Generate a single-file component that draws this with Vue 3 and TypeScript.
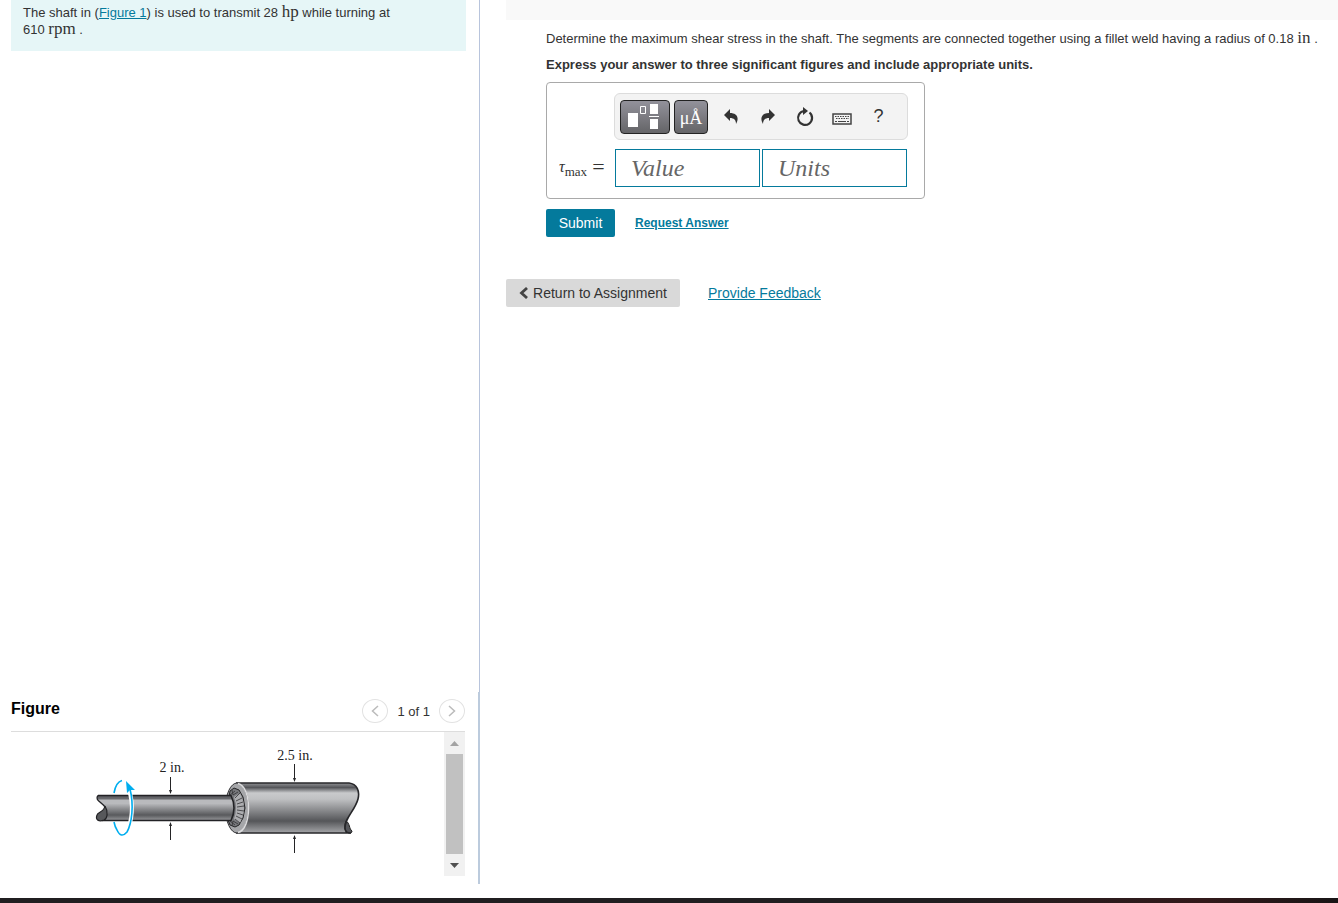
<script setup lang="ts">
import { ref } from 'vue'

const value = ref('')
const units = ref('')
const page = ref(1)
const pageCount = 1
const weldMarks = [
  'M230 795 l5 -4 M232 790 l1 5 M233 795 l5 -3',
  'M235 798 l5 -5 M236 801 l6 -3 M237 804 l6 -2 M237 807 l7 -1 M237 810 l7 1 M237 813 l6 2 M236 816 l6 3 M235 819 l5 4',
  'M230 821 l5 4 M232 826 l1 -5 M233 821 l5 3',
]
</script>

<template>
  <div class="app">
    <div class="columns">
      <aside class="side">
        <section class="problem">
          <p class="intro">
            The shaft in (<a href="#figure">Figure 1</a>) is used to transmit 28
            <span class="unit">hp</span> while turning at<br />
            610 <span class="unit">rpm</span> .
          </p>
        </section>
        <section id="figure" class="figure">
          <header class="figure-head">
            <h2>Figure</h2>
            <nav class="pager" aria-label="Figure pages">
              <button type="button" aria-label="Previous figure">
                <svg width="8" height="12" viewBox="0 0 8 12"><path d="M7 1 L1.500 6 L7 11" /></svg>
              </button>
              <span>{{ page }} of {{ pageCount }}</span>
              <button type="button" aria-label="Next figure">
                <svg width="8" height="12" viewBox="0 0 8 12"><path d="M1 1 L6.500 6 L1 11" /></svg>
              </button>
            </nav>
          </header>
          <div class="figure-view">
            <svg class="drawing" viewBox="11 732 433 144" role="img" aria-label="Stepped shaft with a fillet weld">
              <defs>
                <linearGradient id="thin" x1="0" y1="0" x2="0" y2="1">
                  <stop offset="0" stop-color="#55565a" />
                  <stop offset=".12" stop-color="#68696d" />
                  <stop offset=".2" stop-color="#b9babd" />
                  <stop offset=".32" stop-color="#b9babd" />
                  <stop offset=".78" stop-color="#58595c" />
                  <stop offset="1" stop-color="#98999c" />
                </linearGradient>
                <linearGradient id="thick" x1="0" y1="0" x2="0" y2="1">
                  <stop offset="0" stop-color="#909194" />
                  <stop offset=".09" stop-color="#55565a" />
                  <stop offset=".2" stop-color="#c9cacc" />
                  <stop offset=".32" stop-color="#c0c1c3" />
                  <stop offset=".76" stop-color="#555659" />
                  <stop offset="1" stop-color="#a5a6a9" />
                </linearGradient>
              </defs>
              <path d="M238 783 H349 C357 784 360 791 358 799 C355 811 344 818 345 829 L347 833 H238 Z" fill="url(#thick)" />
              <path d="M346 821 C350 823 349 829 352 831 C352 834 348 834 346 831 C344 828 345 824 346 821" fill="#55565a" stroke="#222" />
              <path d="M236 783 H349 C357 784 360 791 358 799 C355 811 344 818 345 829 C346 833 348 833 351 833 H236" fill="none" stroke="#27272a" stroke-width="1.600" />
              <ellipse cx="237" cy="808" rx="11.500" ry="25" fill="#a5a6a9" stroke="#303033" />
              <path d="M238 783.500 C252 786 252 830 238 832.500" fill="none" stroke="#dcdcde" stroke-width="1.500" />
              <path d="M229 797 L230 791 L234 788 L239 790 L243 797 L245 808 L243 818 L239 825 L235 827 L230 825 L228 820 Z" fill="#77787c" stroke="#242426" />
              <path d="M234 797 L240 793 Q248 808 240 823 L234 819 Q238 808 234 797" fill="#acadb0" />
              <path v-for="mark in weldMarks" :key="mark" :d="mark" fill="none" stroke="#333336" stroke-width="0.800" />
              <path d="M98 795.500 H231 Q237 808 231 820.500 H102 C109 817 108 811 105 807 C101 803 94 801 98 795.500" fill="url(#thin)" />
              <path d="M102 820.500 H231 Q237 808 231 795.500 H98" fill="none" stroke="#222225" stroke-width="1.600" />
              <path d="M98 795.500 C94 800 102 802 105 807" fill="none" stroke="#222225" stroke-width="1.300" />
              <path d="M105 806 C108 811 108 818 104 820 C99 822 95 820 97 815 C98 812 104 812 105 806" fill="#57585b" stroke="#222225" stroke-width="1.200" />
              <path d="M129 790 C134 805 132 821 127 831" fill="none" stroke="#fff" stroke-width="4" />
              <g fill="none" stroke="#00aeef" stroke-width="1.600">
                <path d="M114 793 Q116 782 122 780.500" />
                <path d="M130 789 C134 805 132 823 127 832 Q121 839 117 830 Q115 827 114 822" />
              </g>
              <path d="M126 781 L135 790 L130 790 L127 793 Z" fill="#00aeef" />
              <path d="M170.500 777 V793 M170.500 824 V840 M294.500 764 V780 M294.500 836 V853" stroke="#242426" />
              <path
                d="M169 790 h3 l-1.500 4 z M169 826 h3 l-1.500 -4 z M293 778 h3 l-1.500 4 z M293 839 h3 l-1.500 -4 z"
                fill="#242426"
              />
              <text x="172" y="772" text-anchor="middle">2 in.</text>
              <text x="295" y="760" text-anchor="middle">2.5 in.</text>
            </svg>
            <div class="scrollbar">
              <button type="button" aria-label="Scroll up">
                <svg width="9" height="5" viewBox="0 0 9 5"><path d="M0 5 L4.500 0 L9 5 Z" fill="#a3a3a3" /></svg>
              </button>
              <div class="thumb"></div>
              <button type="button" aria-label="Scroll down">
                <svg width="9" height="5" viewBox="0 0 9 5"><path d="M0 0 L4.500 5 L9 0 Z" fill="#505050" /></svg>
              </button>
            </div>
          </div>
        </section>
      </aside>

      <main class="work">
        <div class="part-bar"></div>
        <form class="part" @submit.prevent>
          <p class="question">
            Determine the maximum shear stress in the shaft. The segments are connected together using a fillet weld having a radius of 0.18 <span class="unit">in</span> .
          </p>
          <p class="hint">Express your answer to three significant figures and include appropriate units.</p>
          <div class="answer">
            <div class="toolbar" role="toolbar" aria-label="Answer tools">
              <button type="button" class="dark wide" aria-label="Templates">
                <svg width="36" height="26" viewBox="0 0 36 26">
                  <path d="M1 9h10v14H1zM23 0h8v10h-8zM23 15h8v10h-8zM22 12h10v1H22z" fill="#fff" />
                  <path d="M13.500 2.500h5v7h-5z" fill="none" stroke="#fff" />
                </svg>
              </button>
              <button type="button" class="dark symbols" aria-label="Symbols">μÅ</button>
              <div class="tools">
                <button type="button" aria-label="Undo">
                  <svg width="14" height="16" viewBox="0 0 14 16"><path d="M0 6 L6 0 V4 C12 4 16 8 12 15 C12 11 10 9 6 9 V12 Z" fill="#333" /></svg>
                </button>
                <button type="button" aria-label="Redo">
                  <svg width="14" height="16" viewBox="0 0 14 16"><path d="M14 6 L8 0 V4 C2 4 -2 8 2 15 C2 11 4 9 8 9 V12 Z" fill="#333" /></svg>
                </button>
                <button type="button" aria-label="Reset">
                  <svg width="18" height="20" viewBox="0 0 18 20"><path d="M13.500 5.500 A7 7 0 1 1 8 4" fill="none" stroke="#333" stroke-width="2.200" /><path d="M7 0 L12 4 L7 8 Z" fill="#333" /></svg>
                </button>
                <button type="button" aria-label="Keyboard">
                  <svg class="keys" width="20" height="12" viewBox="0 0 20 12">
                    <path d="M1 1h18v10H1z" fill="none" stroke="#444" stroke-width="1.500" />
                    <path d="M3 3.500h14M4 5.500h13" stroke="#444" stroke-dasharray="1.500 1" />
                    <path d="M3 8.500h2M6 8.500h8M15 8.500h2" stroke="#444" />
                  </svg>
                </button>
                <button type="button" class="help" aria-label="Help">?</button>
              </div>
            </div>
            <div class="entry">
              <label for="value"><span><i>τ</i><sub>max</sub></span> <span class="equals">=</span></label>
              <input id="value" v-model="value" type="text" placeholder="Value" />
              <input v-model="units" type="text" placeholder="Units" aria-label="Units" />
            </div>
          </div>
          <div class="actions">
            <button type="submit" class="submit">Submit</button>
            <a href="#answer">Request Answer</a>
          </div>
        </form>
        <div class="footer-links">
          <button type="button" class="return">
            <svg width="10" height="12" viewBox="0 0 10 12"><path d="M8 1 L2.500 6 L8 11" fill="none" stroke="#444" stroke-width="2.800" /></svg>
            Return to Assignment
          </button>
          <a href="#feedback">Provide Feedback</a>
        </div>
      </main>
    </div>
    <div class="taskbar"></div>
  </div>
</template>

<style>
body {
  margin: 0;
  background: #fff;
}
</style>

<style scoped>
* {
  box-sizing: border-box;
}
.app {
  min-height: 100vh;
  display: flex;
  flex-direction: column;
  font: 13px/17px "Liberation Sans", Arial, sans-serif;
  color: #333;
}
p,
h2 {
  margin: 0;
}
button {
  font: inherit;
  color: inherit;
  padding: 0;
  border: 0;
  background: none;
  cursor: pointer;
  display: flex;
  align-items: center;
  justify-content: center;
}
a {
  color: #047a9c;
}
.unit {
  font: 17px/1px "Liberation Serif", serif;
}
.columns {
  flex: 1;
  display: grid;
  grid-template-columns: 480fr 858fr;
  padding-bottom: 14px;
}
.side {
  display: flex;
  flex-direction: column;
}
.problem {
  flex: 1;
  padding: 0 13px 0 11px;
  border-right: 1px solid #b8c4dc;
}
.intro {
  padding: 4px 12px 13px;
  background: #e6f6f7;
}
.figure {
  padding: 0 13px 8px 11px;
  border-right: 2px solid #bccbdd;
}
.figure-head {
  height: 40px;
  display: flex;
  justify-content: space-between;
  border-bottom: 1px solid #ddd;
}
h2 {
  font-size: 16px;
  line-height: 34px;
  color: #000;
}
.pager {
  height: 38px;
  display: flex;
  align-items: center;
  gap: 9px;
}
.pager button {
  width: 26px;
  height: 24px;
  border: 1px solid #e2e2e2;
  border-radius: 50%;
}
.pager path {
  fill: none;
  stroke: #bbb;
  stroke-width: 1.5px;
}
.figure-view {
  display: flex;
  justify-content: space-between;
  height: 144px;
}
.drawing {
  width: 433px;
  height: 144px;
}
.drawing text {
  font: 14px "Liberation Serif", serif;
  fill: #222;
}
.scrollbar {
  width: 21px;
  background: #f1f1f1;
  display: flex;
  flex-direction: column;
}
.scrollbar button {
  flex: 1;
}
.thumb {
  height: 100px;
  margin: 0 2px;
  background: #c1c1c1;
}
.work {
  padding-left: 26px;
}
.part-bar {
  height: 20px;
  background: #f9f9f9;
}
.part {
  padding: 10px 0 0 40px;
}
.question {
  white-space: nowrap;
}
.hint {
  margin-top: 9px;
  font-weight: bold;
}
.answer {
  width: 379px;
  margin-top: 9px;
  padding: 10px 16px 11px 12px;
  border: 1px solid #a9a9a9;
  border-radius: 4px;
}
.toolbar {
  margin-left: 55px;
  height: 47px;
  padding: 0 5px;
  display: flex;
  align-items: center;
  gap: 4px;
  border: 1px solid #dcdcdc;
  border-radius: 6px;
  background: #f3f3f3;
}
.dark {
  width: 34px;
  height: 34px;
  border: 1px solid #222;
  border-radius: 4px;
  background: linear-gradient(#93929b, #646467);
  color: #fff;
}
.symbols {
  padding-top: 4px;
  font: 18px "Liberation Serif", serif;
}
.wide {
  width: 50px;
}
.tools {
  display: flex;
}
.tools button {
  width: 37px;
  height: 34px;
}
.keys {
  margin-top: 4px;
}
.tools .help {
  font-size: 18px;
}
.entry {
  display: flex;
  gap: 2px;
  margin-top: 9px;
}
.entry label {
  width: 54px;
  display: flex;
  gap: 5px;
  line-height: 36px;
  font-family: "Liberation Serif", serif;
  font-size: 16px;
  white-space: nowrap;
}
.entry sub {
  font-size: 13px;
  line-height: 0;
}
.entry .equals {
  font-size: 22px;
}
.entry input {
  width: 145px;
  height: 38px;
  padding: 0 15px;
  border: 1px solid #047a9c;
  border-radius: 0;
  font: italic 24px "Liberation Serif", serif;
  color: #333;
}
.entry input::placeholder {
  color: #666;
  opacity: 1;
}
.actions {
  display: flex;
  align-items: center;
  gap: 20px;
  margin-top: 10px;
  font-size: 12px;
  font-weight: bold;
}
.submit {
  width: 69px;
  height: 28px;
  background: #047a9c;
  color: #fff;
  font-size: 14px;
  font-weight: normal;
  border-radius: 2px;
}
.footer-links {
  display: flex;
  align-items: center;
  gap: 28px;
  margin-top: 42px;
  font-size: 14px;
}
.return {
  width: 174px;
  height: 28px;
  gap: 4px;
  background: #d9d9d9;
  border-radius: 2px;
}
.taskbar {
  height: 5px;
  background: linear-gradient(90deg, #201e20, #201e20 70%, #32191a 90%, #181516);
}
</style>
